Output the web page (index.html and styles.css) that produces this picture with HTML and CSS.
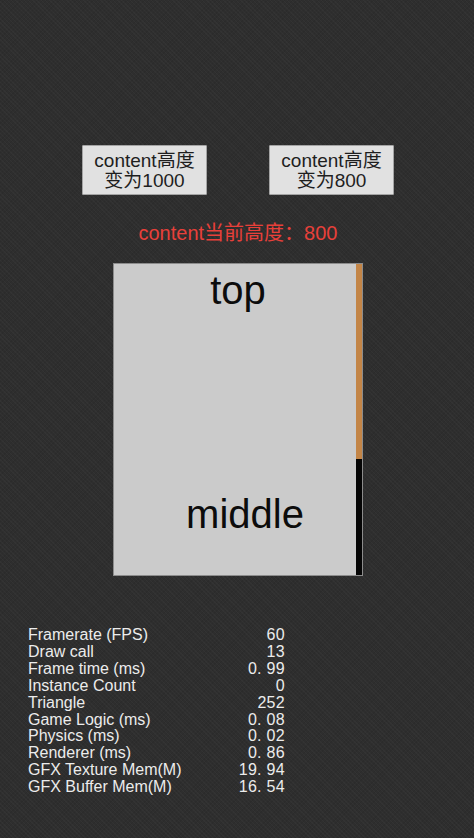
FILE: index.html
```html
<!DOCTYPE html>
<html lang="zh">
<head>
<meta charset="utf-8">
<title>content height</title>
<link rel="stylesheet" href="styles.css">
</head>
<body>
<div class="page">
  <div class="btn-row">
    <div class="btn">content高度<br>变为1000</div>
    <div class="btn">content高度<br>变为800</div>
  </div>
  <div class="status">content当前高度：800</div>
  <div class="panel">
    <div class="view">
      <div class="label label-top">top</div>
      <div class="label label-middle">middle</div>
    </div>
    <div class="scrollbar">
      <div class="thumb"></div>
    </div>
  </div>
  <div class="stats">
    <div class="k">Framerate (FPS)</div><div class="v">60</div>
    <div class="k">Draw call</div><div class="v">13</div>
    <div class="k">Frame time (ms)</div><div class="v">0. 99</div>
    <div class="k">Instance Count</div><div class="v">0</div>
    <div class="k">Triangle</div><div class="v">252</div>
    <div class="k">Game Logic (ms)</div><div class="v">0. 08</div>
    <div class="k">Physics (ms)</div><div class="v">0. 02</div>
    <div class="k">Renderer (ms)</div><div class="v">0. 86</div>
    <div class="k">GFX Texture Mem(M)</div><div class="v">19. 94</div>
    <div class="k">GFX Buffer Mem(M)</div><div class="v">16. 54</div>
  </div>
</div>
</body>
</html>
```
FILE: styles.css
```css
html, body {
  margin: 0;
  padding: 0;
}
body {
  width: 474px;
  height: 838px;
  overflow: hidden;
  background-color: #2e2e2e;
  background-image:
    repeating-linear-gradient(45deg, rgba(255,255,255,0.025) 0 1px, transparent 1px 3px),
    repeating-linear-gradient(-45deg, rgba(0,0,0,0.06) 0 1px, transparent 1px 3px);
  font-family: "Liberation Sans", "Noto Sans CJK SC", Arial, sans-serif;
}
.page {
  display: flex;
  flex-direction: column;
  padding-top: 145px;
}
.btn-row {
  display: flex;
  gap: 62px;
  padding-left: 82px;
}
.btn {
  box-sizing: border-box;
  width: 125px;
  height: 50px;
  background: #e1e1e1;
  border: 1px solid #a4a4a4;
  border-radius: 1px;
  color: #1e1e1e;
  font-size: 19px;
  line-height: 20px;
  text-align: center;
  padding-top: 5px;
}
.status {
  margin-top: 26px;
  text-align: center;
  color: #e8403a;
  font-size: 20px;
  line-height: 24px;
  padding-left: 2px;
}
.panel {
  box-sizing: border-box;
  margin-top: 18px;
  margin-left: 113px;
  width: 250px;
  height: 313px;
  display: flex;
  background: #cbcbcb;
  border: 1px solid #8c8c8c;
}
.view {
  flex: 1;
  display: flex;
  flex-direction: column;
  padding-top: 3px;
}
.label {
  font-size: 40px;
  line-height: 46px;
  color: #0c0c0c;
  text-align: center;
}
.label-top {
  padding-left: 6px;
}
.label-middle {
  margin-top: 178px;
  padding-left: 20px;
}
.scrollbar {
  width: 6px;
  background: #050505;
  display: flex;
  flex-direction: column;
}
.thumb {
  height: 195px;
  background: #c38547;
}
.stats {
  margin-top: 51px;
  margin-left: 28px;
  width: 257px;
  display: grid;
  grid-template-columns: 1fr auto;
  color: #ececec;
  font-size: 16px;
  line-height: 16.9px;
}
.v {
  text-align: right;
  letter-spacing: 0.3px;
}
```
